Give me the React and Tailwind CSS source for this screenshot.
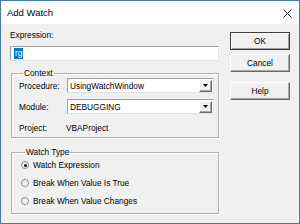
import React from "react";

const sunken =
  "border-t border-l border-t-[#a0a0a0] border-l-[#a0a0a0] border-r border-b border-r-[#e3e3e3] border-b-[#e3e3e3] bg-white";

function ComboBox({ value }) {
  return (
    <div className={"flex h-[15px] w-[147px] items-center " + sunken}>
      <span className="flex-1 pl-[2px] leading-[10px]">{value}</span>
      <div className="mr-[1px] flex h-[12px] w-[13px] items-center justify-center border-t border-l border-t-white border-l-white border-r border-b border-r-[#6a6a6a] border-b-[#6a6a6a] bg-[#f0f0f0] shadow-[inset_-1px_-1px_0_#a8a8a8]">
        <svg width="5" height="3" viewBox="0 0 5 3">
          <path d="M0 0h5L2.5 3z" fill="#000" />
        </svg>
      </div>
    </div>
  );
}

function Radio({ checked, label }) {
  return (
    <div className="flex h-[18px] items-center gap-[4px]">
      <div className="flex h-[8px] w-[8px] items-center justify-center rounded-full border border-[#8c8c8c] bg-gradient-to-br from-[#e6e6e6] to-white">
        {checked && <div className="h-[3px] w-[3px] rounded-full bg-black" />}
      </div>
      <span className="leading-[10px]">{label}</span>
    </div>
  );
}

function Button({ label, isDefault }) {
  const edge = isDefault
    ? "border border-[#3c3c3c] shadow-[inset_1px_1px_0_#fff,inset_-1px_-1px_0_#a0a0a0]"
    : "border-t border-l border-t-white border-l-white border-r border-b border-r-[#6a6a6a] border-b-[#6a6a6a] shadow-[inset_-1px_-1px_0_#a8a8a8]";
  return (
    <div className={"flex h-[18px] w-[60px] items-center justify-center bg-[#f0f0f0] leading-[10px] " + edge}>
      {label}
    </div>
  );
}

export default function App() {
  return (
    <div
      className="flex h-[224px] w-[300px] flex-col border border-[#3b7cbf] bg-[#f0f0f0] text-[8.3px] text-black"
      style={{ fontFamily: '"Liberation Sans", Arial, sans-serif' }}
    >
      {/* title bar */}
      <div className="flex h-[23px] items-center justify-between bg-white">
        <span className="pl-[6px] text-[9.5px] leading-[12px]">Add Watch</span>
        <svg className="mr-[7px] mt-[1px]" width="9" height="9" viewBox="0 0 9 9">
          <path d="M0.5 0.5l8 8M8.5 0.5l-8 8" stroke="#222" strokeWidth="1" fill="none" />
        </svg>
      </div>

      <div className="flex pl-[9px]">
        {/* left column */}
        <div className="flex w-[209px] flex-col pt-[6px]">
          <div className="leading-[10px]">Expression:</div>
          <div className={"mt-[6px] flex h-[15px] items-center pl-[3px] " + sunken}>
            <span className="bg-[#0078d7] px-[1px] leading-[11px] text-white">rg</span>
          </div>

          <fieldset className="ml-[1px] mt-[8px] border border-[#b0b0b0] pb-[4px] pl-[7px] pr-[4px] shadow-[1px_1px_0_#fff,inset_1px_1px_0_#fff]">
            <legend className="ml-[4px] px-[1px] leading-[9px]">Context</legend>
            <div className="flex items-center">
              <span className="w-[48px] leading-[10px]">Procedure:</span>
              <ComboBox value="UsingWatchWindow" />
            </div>
            <div className="mt-[6px] flex items-center">
              <span className="w-[48px] leading-[10px]">Module:</span>
              <ComboBox value="DEBUGGING" />
            </div>
            <div className="mt-[9px] flex leading-[10px]">
              <span className="w-[47px]">Project:</span>
              <span>VBAProject</span>
            </div>
          </fieldset>

          <fieldset className="ml-[1px] mt-[10px] border border-[#b0b0b0] pb-[3px] pl-[9px] shadow-[1px_1px_0_#fff,inset_1px_1px_0_#fff]">
            <legend className="ml-[4px] px-[1px] leading-[9px]">Watch Type</legend>
            <div className="-mt-[1px] flex flex-col">
              <Radio checked label="Watch Expression" />
              <Radio label="Break When Value Is True" />
              <Radio label="Break When Value Changes" />
            </div>
          </fieldset>
        </div>

        {/* buttons */}
        <div className="ml-[11px] flex flex-col pt-[8px]">
          <Button label="OK" isDefault />
          <div className="mt-[4px]">
            <Button label="Cancel" />
          </div>
          <div className="mt-[10px]">
            <Button label="Help" />
          </div>
        </div>
      </div>
    </div>
  );
}
